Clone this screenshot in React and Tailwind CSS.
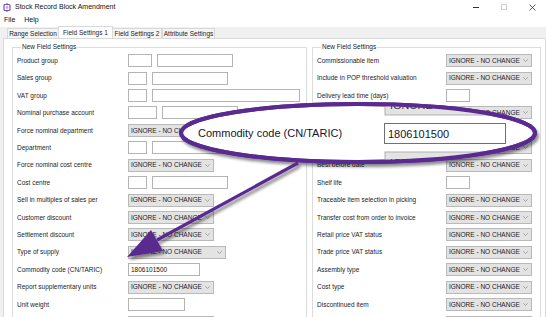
import React from 'react';

const ROW = 'flex h-[17.43px] items-center';

function TextBox({ w, value }) {
  return (
    <div
      className="flex h-[13px] items-center border border-[#b4b4b4] bg-white pl-[2px] text-[6.5px] text-[#111]"
      style={{ width: w }}
    >
      {value}
    </div>
  );
}

function Dropdown({ w = 86, blank }) {
  return (
    <div
      className="flex h-[13px] items-center justify-between border border-[#b9b9b9] bg-[#e3e3e3] pl-[2px] pr-[3px] text-[6.5px] text-[#222]"
      style={{ width: w }}
    >
      {!blank && <span>IGNORE - NO CHANGE</span>}
      {!blank && (
        <svg width="5" height="3" viewBox="0 0 5 3">
          <path d="M0.3 0.3 L2.5 2.5 L4.7 0.3" fill="none" stroke="#8a8a8a" strokeWidth="0.7" />
        </svg>
      )}
    </div>
  );
}

function Row({ label, labelW, children }) {
  return (
    <div className={ROW}>
      <div className="shrink-0 whitespace-nowrap" style={{ width: labelW }}>
        {label}
      </div>
      <div className="flex items-center gap-[5px]">{children}</div>
    </div>
  );
}

const leftRows = [
  ['Product group', <><TextBox w={24} /><TextBox w={76} /></>],
  ['Sales group', <><TextBox w={19} /><TextBox w={76} /></>],
  ['VAT group', <><TextBox w={19} /><TextBox w={148} /></>],
  ['Nominal purchase account', <><TextBox w={29} /><TextBox w={76} /></>],
  ['Force nominal department', <Dropdown />],
  ['Department', <><TextBox w={19} /><TextBox w={76} /></>],
  ['Force nominal cost centre', <Dropdown />],
  ['Cost centre', <><TextBox w={19} /><TextBox w={76} /></>],
  ['Sell in multiples of sales per', <Dropdown />],
  ['Customer discount', <Dropdown />],
  ['Settlement discount', <Dropdown />],
  ['Type of supply', <Dropdown w={98} />],
  ['Commodity code (CN/TARIC)', <TextBox w={72} value="1806101500" />],
  ['Report supplementary units', <Dropdown />],
  ['Unit weight', <TextBox w={57} />],
  ['', <Dropdown blank />],
];

const rightRows = [
  ['Commissionable item', <Dropdown />],
  ['Include in POP threshold valuation', <Dropdown />],
  ['Delivery lead time (days)', <TextBox w={24} />],
  ['Serial number tracking', <Dropdown />],
  ['Batch number tracking', <Dropdown />],
  ['Use by date', <Dropdown />],
  ['Best before date', <Dropdown />],
  ['Shelf life', <TextBox w={24} />],
  ['Traceable item selection in picking', <Dropdown />],
  ['Transfer cost from order to invoice', <Dropdown />],
  ['Retail price VAT status', <Dropdown />],
  ['Trade price VAT status', <Dropdown />],
  ['Assembly type', <Dropdown />],
  ['Cost type', <Dropdown />],
  ['Discontinued item', <Dropdown />],
  ['', <Dropdown blank />],
];

function GroupBox({ width, labelW, rows }) {
  return (
    <fieldset
      className="shrink-0 border border-[#dcdcdc] px-[4px] pt-[1px]"
      style={{ width }}
    >
      <legend className="ml-[4px] px-[1px] text-[6.5px] leading-[8px] text-[#222]">New Field Settings</legend>
      <div className="flex flex-col">
        {rows.map(([label, ctrl], i) => (
          <Row key={label + i} label={label} labelW={labelW}>
            {ctrl}
          </Row>
        ))}
      </div>
    </fieldset>
  );
}

function Tab({ w, active, children }) {
  return (
    <div
      className={
        active
          ? 'relative z-10 -mx-px flex h-[12px] items-center justify-center border border-b-0 border-[#d9d9d9] bg-white'
          : 'flex h-[10px] items-center justify-center border border-b-0 border-[#d9d9d9] bg-[#f4f4f4]'
      }
      style={{ width: w }}
    >
      {children}
    </div>
  );
}

function Overlay() {
  const purple = '#5a2a91';
  return (
    <svg className="pointer-events-none absolute left-0 top-0" width="546" height="317" viewBox="0 0 546 317">
      <defs>
        <filter id="shadow" x="-10%" y="-40%" width="125%" height="190%">
          <feDropShadow dx="2" dy="3" stdDeviation="1.8" floodColor="#000" floodOpacity="0.45" />
        </filter>
        <clipPath id="inside">
          <ellipse cx="358" cy="133" rx="177" ry="29" />
        </clipPath>
      </defs>

      <g filter="url(#shadow)">
        <line x1="298" y1="163" x2="157" y2="240" stroke={purple} strokeWidth="3.2" />
        <polygon points="127,257 151,230 163,251" fill={purple} />
        <ellipse cx="358" cy="133" rx="177" ry="29" fill="#fff" stroke={purple} strokeWidth="4" />
      </g>

      <g clipPath="url(#inside)" fontFamily="'Liberation Sans', Arial, sans-serif">
        <rect x="385" y="94" width="163" height="21" fill="#e3e3e3" stroke="#b0b0b0" />
        <text x="390" y="109" fontSize="10.8" fill="#333">IGNORE - NO CHANGE</text>
        <rect x="385" y="152" width="143" height="21" fill="#e3e3e3" stroke="#b0b0b0" />
        <text x="390" y="167" fontSize="10.8" fill="#333">IGNORE - NO CHANGE</text>
        <text x="198" y="137" fontSize="11" fill="#15142e">Commodity code (CN/TARIC)</text>
        <rect x="384.5" y="123.5" width="121" height="20" fill="#fff" stroke="#707070" />
        <text x="388" y="137.5" fontSize="11" fill="#15142e">1806101500</text>
      </g>

      <ellipse cx="358" cy="133" rx="177" ry="29" fill="none" stroke={purple} strokeWidth="4" />
    </svg>
  );
}

export default function App() {
  return (
    <div className="relative h-[317px] w-[546px] overflow-hidden bg-[#f0f0f0] font-['Liberation_Sans',Arial,sans-serif] text-[6.5px] text-[#1d1d1d]">
      {/* title bar */}
      <div className="flex h-[14px] items-center bg-white pl-[3px]">
        <svg width="8" height="9" viewBox="0 0 8 9">
          <rect x="1" y="1.5" width="6" height="6" rx="1" fill="none" stroke="#7b4fa8" strokeWidth="1.2" />
          <circle cx="4" cy="4.5" r="1.4" fill="#c9a7e4" />
          <circle cx="4" cy="1.2" r="1" fill="#7b4fa8" />
          <circle cx="4" cy="7.8" r="1" fill="#7b4fa8" />
        </svg>
        <span className="ml-[4px] text-[7px] text-[#111]">Stock Record Block Amendment</span>
        <div className="ml-auto flex items-center">
          <div className="flex w-[28px] justify-center">
            <div className="h-px w-[6px] bg-[#333]" />
          </div>
          <div className="flex w-[28px] justify-center">
            <div className="h-[6px] w-[6px] border border-[#cfcfcf]" />
          </div>
          <div className="flex w-[28px] justify-center">
            <svg width="7" height="7" viewBox="0 0 7 7">
              <path d="M0.5 0.5 L6.5 6.5 M6.5 0.5 L0.5 6.5" stroke="#333" strokeWidth="0.8" />
            </svg>
          </div>
        </div>
      </div>

      {/* menu bar */}
      <div className="flex h-[13px] items-center gap-[9px] bg-white pl-[4px] text-[7px] text-[#111]">
        <span>File</span>
        <span>Help</span>
      </div>

      {/* tabs */}
      <div className="flex h-[11px] items-end pl-[7px]">
        <Tab w={52}>Range Selection</Tab>
        <Tab w={55} active>Field Settings 1</Tab>
        <Tab w={50}>Field Settings 2</Tab>
        <Tab w={53}>Attribute Settings</Tab>
      </div>

      {/* tab page */}
      <div className="ml-[3px] flex h-[300px] gap-[5px] border border-[#d9d9d9] bg-white pl-[8px] pt-[4px]">
        <GroupBox width={295} labelW={111} rows={leftRows} />
        <GroupBox width={229} labelW={129} rows={rightRows} />
      </div>

      <Overlay />
    </div>
  );
}
